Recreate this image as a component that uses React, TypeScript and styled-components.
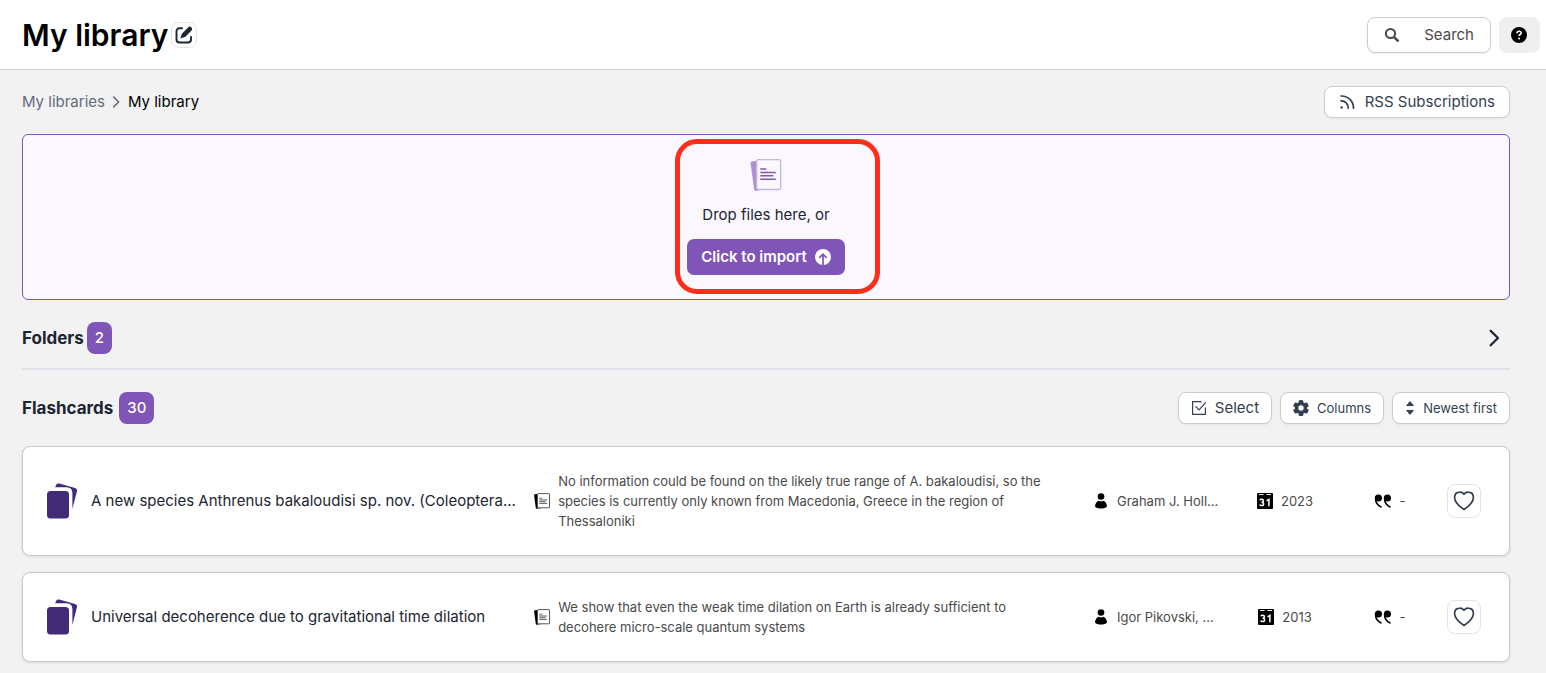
import React from "react";
import styled, { createGlobalStyle } from "styled-components";

const purple = "#8055b8";
const ink = "#1c2532";
const slate = "#343f50";

const GlobalStyle = createGlobalStyle`
  *, *::before, *::after { box-sizing: border-box; }
  body {
    margin: 0;
    background: #f2f2f2;
    color: ${ink};
    font-family: Inter, "Liberation Sans", sans-serif;
    font-size: 15px;
    line-height: 24px;
  }
  h1, h2, p, ul, ol { margin: 0; padding: 0; }
  ul, ol { list-style: none; }
  button { font: inherit; cursor: pointer; }
  svg { display: block; flex: none; }
`;

const Header = styled.header`
  display: flex;
  align-items: center;
  justify-content: space-between;
  height: 70px;
  padding: 0 6px 0 22px;
  background: #fff;
  border-bottom: 1px solid #d3d3d3;
`;

const TitleGroup = styled.div`
  display: flex;
  align-items: center;
  gap: 3px;
`;

const PageTitle = styled.h1`
  color: #000;
  font-size: 30px;
  font-weight: 600;
  line-height: 40px;
`;

const HeaderActions = styled.div`
  display: flex;
  gap: 8px;
`;

const Button = styled.button<{ $height?: number; $gap?: number; $pad?: number; $small?: boolean }>`
  display: flex;
  align-items: center;
  gap: ${(p) => p.$gap ?? 8}px;
  height: ${(p) => p.$height ?? 32}px;
  padding: 0 ${(p) => p.$pad ?? 12}px;
  border: 1px solid #cdcdcd;
  border-radius: 8px;
  background: #fff;
  box-shadow: 0 1px 2px rgba(0, 0, 0, 0.06);
  color: ${slate};
  font-size: ${(p) => (p.$small ? 13 : 15)}px;
  white-space: nowrap;
`;

const SearchButton = styled(Button)`
  color: #4a4a4a;
`;

const IconButton = styled.button<{ $size: number }>`
  display: flex;
  align-items: center;
  justify-content: center;
  width: ${(p) => p.$size}px;
  height: ${(p) => p.$size}px;
  padding: 0;
  border: 1px solid #e2e2ea;
  border-radius: 8px;
  background: #fff;
  color: ${ink};
`;

const HelpButton = styled.button`
  display: flex;
  align-items: center;
  justify-content: center;
  width: 41px;
  height: 36px;
  padding: 0 1px 0 0;
  border: 0;
  border-radius: 8px;
  background: #efefef;
  color: #000;
`;

const Main = styled.main`
  padding: 16px 36px 12px 22px;
`;

const TopRow = styled.div`
  display: flex;
  align-items: center;
  justify-content: space-between;
  margin-bottom: 16px;
`;

const Crumbs = styled.ol`
  display: flex;
  align-items: center;
  gap: 5px;
  color: #000;
`;

const Crumb = styled.li`
  display: flex;
  align-items: center;
  gap: 6px;

  svg { color: #636b7c; }
`;

const CrumbLink = styled.a`
  color: #636b7c;
  text-decoration: none;
`;

const DropZone = styled.section`
  display: flex;
  justify-content: center;
  padding: 24px;
  border: 1px solid ${purple};
  border-radius: 6px;
  background: #faf7ff;
`;

const DropContent = styled.div`
  position: relative;
  display: flex;
  flex-direction: column;
  align-items: center;
  gap: 12px;
`;

const Highlight = styled.div`
  position: absolute;
  inset: -20px -35px -19px -12px;
  border: 5px solid #ff2d1c;
  border-radius: 22px;
  pointer-events: none;
`;

const ImportButton = styled.button`
  display: flex;
  align-items: center;
  justify-content: center;
  gap: 8px;
  height: 36px;
  padding: 0 14px;
  border: 0;
  border-radius: 7px;
  background: ${purple};
  color: #fff;
  font-weight: 600;
  white-space: nowrap;
`;

const SectionBar = styled.div<{ $divided?: boolean }>`
  display: flex;
  align-items: center;
  justify-content: space-between;
  padding: 22px 0 ${(p) => (p.$divided ? 14 : 22)}px;
  border-bottom: ${(p) => (p.$divided ? "2px solid #e0e0e8" : "0")};
`;

const SectionTitle = styled.div<{ $gap: number }>`
  display: flex;
  align-items: center;
  gap: ${(p) => p.$gap}px;
`;

const SectionHeading = styled.h2`
  font-size: 17px;
  font-weight: 700;
`;

const Badge = styled.span`
  padding: 4px 8px;
  border-radius: 8px;
  background: ${purple};
  color: #fff;
  font-weight: 500;
`;

const ExpandButton = styled.button`
  padding: 0 7px 0 0;
  border: 0;
  background: none;
  color: ${ink};
`;

const Toolbar = styled.div`
  display: flex;
  gap: 8px;
`;

const CardList = styled.ul`
  display: flex;
  flex-direction: column;
  gap: 16px;
`;

const Card = styled.li`
  display: grid;
  grid-template-columns: minmax(0, 13fr) minmax(0, 15fr) 124px 94px 73px 34px;
  align-items: center;
  column-gap: 21px;
  padding: 24px 28px 24px 24px;
  border: 1px solid #c9c9c9;
  border-radius: 8px;
  background: #fff;
  box-shadow: 0 1px 3px rgba(0, 0, 0, 0.1);
`;

const CardTitle = styled.div`
  display: flex;
  align-items: center;
  gap: 14px;
  white-space: nowrap;
`;

const Detail = styled.div<{ $center?: boolean }>`
  display: flex;
  align-items: center;
  justify-content: ${(p) => (p.$center ? "center" : "flex-start")};
  gap: 8px;
  color: #4a4a4a;
  font-size: 13px;
  line-height: 20px;
  white-space: nowrap;

  svg { color: #000; }
`;

const Summary = styled(Detail)`
  padding-right: 16px;
  white-space: normal;
`;

const EditIcon = () => (
  <svg width="18" height="18" viewBox="0 0 18 18" fill="none" aria-hidden="true">
    <path d="M7 2.200H4.500A3 3 0 0 0 1.500 5.200v8.300a3 3 0 0 0 3 3H13a3 3 0 0 0 3-3V11" stroke="currentColor" strokeWidth="1.900" strokeLinecap="round" />
    <path d="M13.100 1.500a2.200 2.200 0 0 1 3.400 2.900L10.400 10.700 5.300 12.600 6.900 7.700z" fill="currentColor" />
  </svg>
);

const SearchIcon = () => (
  <svg width="16" height="16" viewBox="0 0 16 16" fill="none" stroke="currentColor" strokeWidth="2" aria-hidden="true">
    <circle cx="6.500" cy="6.500" r="4.600" />
    <path d="m9.800 9.800 4.700 4.500" strokeWidth="2.400" />
  </svg>
);

const HelpIcon = () => (
  <svg width="16" height="16" viewBox="0 0 16 16" fill="none" aria-hidden="true">
    <circle cx="8" cy="8" r="8" fill="currentColor" />
    <path d="M5.900 6.200C6 4.900 6.900 4.200 8.100 4.200c1.200 0 2.100.7 2.100 1.800 0 1.500-2.100 1.500-2.100 3.100" stroke="#fff" strokeWidth="1.600" />
    <circle cx="8.100" cy="11.400" r="1" fill="#fff" />
  </svg>
);

const RssIcon = () => (
  <svg width="16" height="16" viewBox="0 0 16 16" fill="none" stroke="currentColor" strokeWidth="1.700" strokeLinecap="round" aria-hidden="true">
    <path d="M2 6.800a7 7 0 0 1 7.200 7.400M2 2a12 12 0 0 1 12.500 12.200" />
    <circle cx="2.600" cy="13.500" r="1.200" fill="currentColor" stroke="none" />
  </svg>
);

const ChevronIcon = ({ size, weight }: { size: number; weight: number }) => (
  <svg width={size} height={size} viewBox="0 0 16 16" fill="none" stroke="currentColor" strokeWidth={weight} aria-hidden="true">
    <path d="m5 1.500 6.500 6.500L5 14.500" strokeLinecap="round" strokeLinejoin="round" />
  </svg>
);

const PagesIcon = () => (
  <svg width="32" height="32" viewBox="0 0 32 32" fill="none" aria-hidden="true">
    <path d="M.6 4.400C.5 3.400 1 2.700 2 2.600L6.500 2v27.500l7 .8-7.500 1.600c-1 .1-1.600-.4-1.800-1.300z" fill="#ad8fd4" />
    <rect x="6.700" y=".7" width="24" height="29.800" rx="1.500" fill="#faf7ff" stroke="#c7b3e2" strokeWidth="1.300" />
    <path d="M10.300 10h6M10.300 13.500h15.500M10.300 16.800h13M10.300 20.200h15.500" stroke={purple} strokeWidth="1.400" />
  </svg>
);

const NotesIcon = () => (
  <svg width="16" height="16" viewBox="0 0 16 16" fill="none" aria-hidden="true">
    <path d="M.1 2.300C0 1.700.3 1.300.9 1.200L3.800.9V14.400l3.600.5-4.600.8c-.6.100-.9-.2-1-.8z" fill="currentColor" />
    <rect x="3.500" y=".6" width="12" height="14.200" rx=".6" fill="#fff" stroke="#444" strokeWidth=".9" />
    <path d="M5.300 5.200h3M5.300 7h7.800M5.300 8.700h6.300M5.300 10.400h7.800" stroke="#333" strokeWidth=".8" />
  </svg>
);

const UploadIcon = () => (
  <svg width="16" height="16" viewBox="0 0 16 16" fill="none" aria-hidden="true">
    <circle cx="8" cy="8" r="8" fill="#fff" />
    <path d="M8 16V5.500M4.300 8.800 8 5.100l3.700 3.700" stroke={purple} strokeWidth="1.700" />
  </svg>
);

const CheckIcon = () => (
  <svg width="16" height="16" viewBox="0 0 16 16" fill="none" stroke="currentColor" strokeWidth="1.200" aria-hidden="true">
    <path d="M10.500 1.600H1.600v12.800h12.800V7.500M4.500 6.300l3.600 3.600 6.700-7.500" />
  </svg>
);

const GearIcon = () => (
  <svg width="16" height="16" viewBox="0 0 16 16" aria-hidden="true">
    <g fill="currentColor">
      {[0, 60, 120].map((angle) => (
        <rect key={angle} x="5.600" y="0" width="4.800" height="16" rx="1.600" transform={`rotate(${angle} 8 8)`} />
      ))}
      <circle cx="8" cy="8" r="6" />
    </g>
    <circle cx="8" cy="8" r="2.700" fill="#fff" />
  </svg>
);

const SortIcon = () => (
  <svg width="10" height="16" viewBox="0 0 10 16" fill="currentColor" stroke="currentColor" strokeLinejoin="round" aria-hidden="true">
    <path d="M5 1.600 8.300 5.600H1.700zM5 14.400 8.300 10.400H1.700z" />
  </svg>
);

const CardsIcon = () => (
  <svg width="30" height="36" viewBox="0 0 30 36" fill="#432a76" aria-hidden="true">
    <rect x="0" y="8" width="22" height="27.500" rx="3.500" />
    <path d="M8.200 4.200 9.200 1.800Q10.200.1 12.200.6L28 4.900Q30.500 5.700 29.900 8.300L25.400 26V10.200Q25.400 4.200 19.500 4.200z" />
  </svg>
);

const PersonIcon = () => (
  <svg width="16" height="16" viewBox="0 0 16 16" fill="currentColor" aria-hidden="true">
    <circle cx="8" cy="3.500" r="3.300" />
    <path d="M2 13.600C2 10.500 3.900 8.300 5.500 7.700q2.500 1.100 5 0C12.100 8.300 14 10.500 14 13.600 13 15.200 10.500 15.600 8 15.600s-5-.4-6-2z" />
  </svg>
);

const CalendarIcon = () => (
  <svg width="16" height="16" viewBox="0 0 16 16" fill="none" aria-hidden="true">
    <rect width="16" height="16" rx="1" fill="currentColor" />
    <path d="M2 1.500h4.600M9.400 1.500H14" stroke="#fff" strokeWidth=".9" />
    <path d="M2.900 7.300C3.200 6.500 4 6.300 4.700 6.300c1 0 1.700.5 1.700 1.400 0 .9-.7 1.500-1.900 1.500 1.300 0 2.100.6 2.100 1.700 0 1-.8 1.700-1.900 1.700-.9 0-1.700-.3-2-1.200M9.600 7.800l2.300-1.400v6.800" stroke="#fff" strokeWidth="1.500" />
  </svg>
);

const QuoteIcon = () => (
  <svg width="18" height="16" viewBox="0 0 18 16" aria-hidden="true">
    {[0, 9].map((x) => (
      <g key={x} transform={`translate(${x} 0)`}>
        <circle cx="4.400" cy="5" r="3.600" fill="currentColor" />
        <path d="M1.500 5.500C1.500 9.800 4 12.600 7.500 14.200" fill="none" stroke="currentColor" strokeWidth="1.500" />
      </g>
    ))}
  </svg>
);

const HeartIcon = () => (
  <svg width="22" height="20" viewBox="0 0 22 20" fill="none" stroke={slate} strokeWidth="1.700" strokeLinejoin="round" aria-hidden="true">
    <path d="M11 3.300C9.600 1.500 7.800 1 6.300 1.200 3.400 1.500 1.500 3.800 1.600 6.800 1.700 11 6 15.200 11 18.500c5-3.300 9.300-7.500 9.400-11.700.1-3-1.800-5.300-4.700-5.600-1.500-.2-3.300.3-4.700 2.100z" />
  </svg>
);

const flashcards = [
  {
    title: "A new species Anthrenus bakaloudisi sp. nov. (Coleoptera...",
    summary:
      "No information could be found on the likely true range of A. bakaloudisi, so the species is currently only known from Macedonia, Greece in the region of Thessaloniki",
    author: "Graham J. Holl...",
    year: "2023",
    citations: "-",
  },
  {
    title: "Universal decoherence due to gravitational time dilation",
    summary:
      "We show that even the weak time dilation on Earth is already sufficient to decohere micro-scale quantum systems",
    author: "Igor Pikovski, ...",
    year: "2013",
    citations: "-",
  },
];

export default function App() {
  return (
    <>
      <GlobalStyle />
      <Header>
        <TitleGroup>
          <PageTitle>My library</PageTitle>
          <IconButton $size={26} aria-label="Rename library"><EditIcon /></IconButton>
        </TitleGroup>
        <HeaderActions>
          <SearchButton $height={36} $gap={24} $pad={16}><SearchIcon />Search</SearchButton>
          <HelpButton aria-label="Help"><HelpIcon /></HelpButton>
        </HeaderActions>
      </Header>
      <Main>
        <TopRow>
          <nav aria-label="Breadcrumb">
            <Crumbs>
              <Crumb><CrumbLink href="#libraries">My libraries</CrumbLink></Crumb>
              <Crumb aria-current="page"><ChevronIcon size={12} weight={2} />My library</Crumb>
            </Crumbs>
          </nav>
          <Button $gap={10} $pad={14}><RssIcon />RSS Subscriptions</Button>
        </TopRow>
        <DropZone>
          <DropContent>
            <PagesIcon />
            <p>Drop files here, or</p>
            <ImportButton>Click to import<UploadIcon /></ImportButton>
            <Highlight />
          </DropContent>
        </DropZone>
        <SectionBar $divided>
          <SectionTitle $gap={3}>
            <SectionHeading>Folders</SectionHeading>
            <Badge>2</Badge>
          </SectionTitle>
          <ExpandButton aria-label="Show folders"><ChevronIcon size={18} weight={2} /></ExpandButton>
        </SectionBar>
        <SectionBar>
          <SectionTitle $gap={6}>
            <SectionHeading>Flashcards</SectionHeading>
            <Badge>30</Badge>
          </SectionTitle>
          <Toolbar>
            <Button><CheckIcon />Select</Button>
            <Button $small><GearIcon />Columns</Button>
            <Button $small><SortIcon />Newest first</Button>
          </Toolbar>
        </SectionBar>
        <CardList>
          {flashcards.map((card) => (
            <Card key={card.title}>
              <CardTitle><CardsIcon /><span>{card.title}</span></CardTitle>
              <Summary><NotesIcon /><p>{card.summary}</p></Summary>
              <Detail><PersonIcon />{card.author}</Detail>
              <Detail $center><CalendarIcon />{card.year}</Detail>
              <Detail $center><QuoteIcon />{card.citations}</Detail>
              <IconButton $size={34} aria-label="Add to favourites"><HeartIcon /></IconButton>
            </Card>
          ))}
        </CardList>
      </Main>
    </>
  );
}
